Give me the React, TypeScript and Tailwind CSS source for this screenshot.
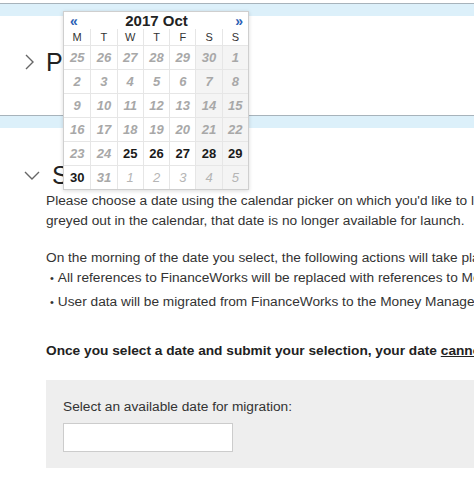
const weeks: { d: number; kind: "off" | "on" | "next" }[][] = [
  [25, 26, 27, 28, 29, 30, 1].map((d) => ({ d, kind: "off" as const })),
  [2, 3, 4, 5, 6, 7, 8].map((d) => ({ d, kind: "off" as const })),
  [9, 10, 11, 12, 13, 14, 15].map((d) => ({ d, kind: "off" as const })),
  [16, 17, 18, 19, 20, 21, 22].map((d) => ({ d, kind: "off" as const })),
  [
    { d: 23, kind: "off" },
    { d: 24, kind: "off" },
    { d: 25, kind: "on" },
    { d: 26, kind: "on" },
    { d: 27, kind: "on" },
    { d: 28, kind: "on" },
    { d: 29, kind: "on" },
  ],
  [
    { d: 30, kind: "on" },
    { d: 31, kind: "off" },
    { d: 1, kind: "next" },
    { d: 2, kind: "next" },
    { d: 3, kind: "next" },
    { d: 4, kind: "next" },
    { d: 5, kind: "next" },
  ],
]

const dayNames = ["M", "T", "W", "T", "F", "S", "S"]

function Band() {
  return <div className="h-[13px] border-t border-[#a7b3bb] bg-[#dcf0fa]" />
}

function Chevron({ down }: { down?: boolean }) {
  return (
    <svg width="16" height="16" viewBox="0 0 16 16" className="shrink-0">
      {down ? (
        <polyline points="1,5 8,12 15,5" fill="none" stroke="#666" strokeWidth="1.4" />
      ) : (
        <polyline points="4,1 11,8 4,15" fill="none" stroke="#666" strokeWidth="1.4" />
      )}
    </svg>
  )
}

function DatePicker() {
  return (
    <div className="absolute left-[63px] top-[11px] w-[186px] bg-white border border-[#cfcfcf] shadow-[0_1px_4px_rgba(0,0,0,0.15)]">
      <div className="h-[17px] flex items-center justify-between pl-[6px] pr-[5px]">
        <span className="text-[14px] font-bold text-[#2b5fb4] leading-none">«</span>
        <span className="text-[15px] font-bold text-[#222] leading-none">2017 Oct</span>
        <span className="text-[14px] font-bold text-[#2b5fb4] leading-none">»</span>
      </div>
      <div className="grid grid-cols-7 h-[16px]">
        {dayNames.map((n, i) => (
          <div
            key={i}
            className={`flex items-center justify-center text-[11px] text-[#333] ${i > 0 ? "border-l border-[#e6e6e6]" : ""}`}
          >
            {n}
          </div>
        ))}
      </div>
      {weeks.map((w, r) => (
        <div key={r} className="grid grid-cols-7 h-[24px] border-t border-[#e6e6e6]">
          {w.map((c, i) => (
            <div
              key={i}
              className={`flex items-center justify-center text-[13px] ${i > 0 ? "border-l border-[#e6e6e6]" : ""} ${i >= 5 ? "bg-[#f4f4f4]" : ""} ${
                c.kind === "on"
                  ? "font-bold text-[#1a1a1a]"
                  : c.kind === "next"
                  ? "italic text-[#b5b5b5]"
                  : "italic font-semibold text-[#a8a8a8]"
              }`}
            >
              {c.d}
            </div>
          ))}
        </div>
      ))}
    </div>
  )
}

export default function App() {
  return (
    <div className="relative w-[474px] h-[485px] overflow-hidden bg-white font-['Liberation_Sans',Arial,sans-serif] text-[#333]">
      <div className="h-[3px]" />
      <Band />
      <div className="h-[99px] pt-[34px]">
        <div className="flex items-center h-[24px] pl-[22px] gap-[8px]">
          <Chevron />
          <span className="text-[25px] text-[#222] whitespace-nowrap leading-none">Pr</span>
        </div>
      </div>
      <Band />
      <div className="pt-[35px]">
        <div className="flex items-center h-[24px] pl-[24px] gap-[12px]">
          <Chevron down />
          <span className="text-[25px] text-[#222] whitespace-nowrap leading-none">S</span>
        </div>
        <div className="pl-[46px] mt-[4px] text-[13.7px] leading-[20px] whitespace-nowrap">
          <p>Please choose a date using the calendar picker on which you'd like to launch Money Manager.</p>
          <p>greyed out in the calendar, that date is no longer available for launch.</p>
          <p className="mt-[17px]">On the morning of the date you select, the following actions will take place:</p>
          <ul>
            <li className="flex items-center gap-[4px] pl-[4px]">
              <span className="text-[11px]">•</span>
              <span>All references to FinanceWorks will be replaced with references to Money Manager</span>
            </li>
            <li className="flex items-center gap-[4px] pl-[4px] mt-[4px]">
              <span className="text-[11px]">•</span>
              <span>User data will be migrated from FinanceWorks to the Money Manager</span>
            </li>
          </ul>
          <p className="mt-[29px] font-bold text-[#222]">
            Once you select a date and submit your selection, your date <span className="underline">cannot</span> be changed.
          </p>
          <div className="mt-[19px] h-[88px] bg-[#eeeeee] pl-[17px] pt-[17px]">
            <p className="text-[#333]">Select an available date for migration:</p>
            <input className="mt-[6px] block w-[170px] h-[29px] bg-white border border-[#cccccc] outline-none" />
          </div>
        </div>
      </div>
      <DatePicker />
    </div>
  )
}
